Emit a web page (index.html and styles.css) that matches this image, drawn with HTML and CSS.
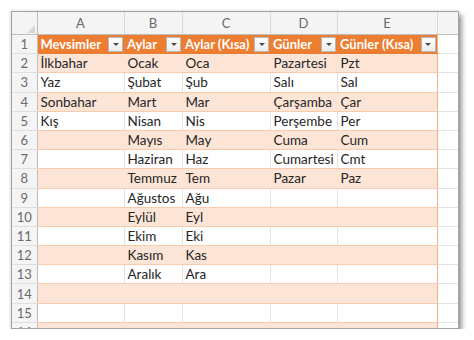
FILE: index.html
```html
<!DOCTYPE html>
<html lang="tr">
<head>
<meta charset="utf-8">
<title>Tablo</title>
<link rel="stylesheet" href="styles.css">
</head>
<body>
<div class="sheet">
  <table class="grid">
    <colgroup>
      <col class="c-rh"><col class="c-a"><col class="c-b"><col class="c-c"><col class="c-d"><col class="c-e"><col class="c-f">
    </colgroup>
    <thead>
      <tr class="letters">
        <th class="corner"><div class="corner-in"><svg width="8" height="8" viewBox="0 0 8 8"><polygon points="8,0 8,8 0,8" fill="#d6d6d6"/></svg></div></th>
        <th>A</th><th>B</th><th>C</th><th>D</th><th>E</th><th class="f"></th>
      </tr>
    </thead>
    <tbody>
      <tr class="hdr">
        <th class="rh">1</th>
        <td><div class="hc"><span>Mevsimler</span><span class="fb"><i></i></span></div></td>
        <td><div class="hc"><span>Aylar</span><span class="fb"><i></i></span></div></td>
        <td><div class="hc"><span>Aylar (Kısa)</span><span class="fb"><i></i></span></div></td>
        <td><div class="hc"><span>Günler</span><span class="fb"><i></i></span></div></td>
        <td class="last"><div class="hc"><span>Günler (Kısa)</span><span class="fb"><i></i></span></div></td>
        <td class="f"></td>
      </tr>
      <tr class="band"><th class="rh">2</th><td>İlkbahar</td><td>Ocak</td><td>Oca</td><td>Pazartesi</td><td class="last">Pzt</td><td class="f"></td></tr>
      <tr class="plain"><th class="rh">3</th><td>Yaz</td><td>Şubat</td><td>Şub</td><td>Salı</td><td class="last">Sal</td><td class="f"></td></tr>
      <tr class="band"><th class="rh">4</th><td>Sonbahar</td><td>Mart</td><td>Mar</td><td>Çarşamba</td><td class="last">Çar</td><td class="f"></td></tr>
      <tr class="plain"><th class="rh">5</th><td>Kış</td><td>Nisan</td><td>Nis</td><td>Perşembe</td><td class="last">Per</td><td class="f"></td></tr>
      <tr class="band"><th class="rh">6</th><td></td><td>Mayıs</td><td>May</td><td>Cuma</td><td class="last">Cum</td><td class="f"></td></tr>
      <tr class="plain"><th class="rh">7</th><td></td><td>Haziran</td><td>Haz</td><td>Cumartesi</td><td class="last">Cmt</td><td class="f"></td></tr>
      <tr class="band"><th class="rh">8</th><td></td><td>Temmuz</td><td>Tem</td><td>Pazar</td><td class="last">Paz</td><td class="f"></td></tr>
      <tr class="plain"><th class="rh">9</th><td></td><td>Ağustos</td><td>Ağu</td><td></td><td class="last"></td><td class="f"></td></tr>
      <tr class="band"><th class="rh">10</th><td></td><td>Eylül</td><td>Eyl</td><td></td><td class="last"></td><td class="f"></td></tr>
      <tr class="plain"><th class="rh">11</th><td></td><td>Ekim</td><td>Eki</td><td></td><td class="last"></td><td class="f"></td></tr>
      <tr class="band"><th class="rh">12</th><td></td><td>Kasım</td><td>Kas</td><td></td><td class="last"></td><td class="f"></td></tr>
      <tr class="plain"><th class="rh">13</th><td></td><td>Aralık</td><td>Ara</td><td></td><td class="last"></td><td class="f"></td></tr>
      <tr class="band"><th class="rh">14</th><td></td><td></td><td></td><td></td><td class="last"></td><td class="f"></td></tr>
      <tr class="plain"><th class="rh">15</th><td></td><td></td><td></td><td></td><td class="last"></td><td class="f"></td></tr>
      <tr class="band"><th class="rh">16</th><td></td><td></td><td></td><td></td><td class="last"></td><td class="f"></td></tr>
    </tbody>
  </table>
</div>
</body>
</html>
```
FILE: styles.css
```css
html, body {
  margin: 0;
  padding: 0;
  background: #ffffff;
}

body {
  font-family: Lato, "Liberation Sans", sans-serif;
  font-size: 13px;
  color: #262626;
}

.sheet {
  margin: 11px 0 0 11px;
  width: 446px;
  height: 316px;
  border: 1px solid #a3a3a3;
  overflow: hidden;
  background: #ffffff;
  box-shadow: 3px 4px 5px rgba(0, 0, 0, 0.38), 0 0 3px rgba(0, 0, 0, 0.15);
}

.grid {
  border-collapse: collapse;
  table-layout: fixed;
  width: 446px;
}

.c-rh { width: 25px; }
.c-a { width: 87px; }
.c-b { width: 58px; }
.c-c { width: 88px; }
.c-d { width: 67px; }
.c-e { width: 100px; }
.c-f { width: 21px; }

.letters th {
  height: 22px;
  padding: 0;
  background: #f4f4f4;
  color: #6a6a6a;
  font-weight: normal;
  text-align: center;
  border-right: 1px solid #dadada;
  border-bottom: 1px solid #bdbdbd;
}

.letters th.corner {
  border-right: 1px solid #bdbdbd;
}

.corner-in {
  height: 21px;
  display: flex;
  justify-content: flex-end;
  align-items: flex-end;
  padding: 0 2px 1px 0;
}

tbody tr {
  height: 19.2px;
}

tbody th.rh {
  padding: 0;
  background: #f4f4f4;
  color: #6a6a6a;
  font-weight: normal;
  text-align: center;
  border-right: 1px solid #bdbdbd;
  border-bottom: 1px solid #dedede;
}

tbody td {
  padding: 0 0 0 3px;
  white-space: nowrap;
  overflow: hidden;
  line-height: 18px;
  font-size: 13.5px;
}

tbody td.f {
  background: #ffffff;
  border-bottom: 1px solid #e2e2e2;
  border-left: 1px solid #f4b084;
}

.hdr td {
  background: #ed7d31;
  color: #ffffff;
  font-weight: bold;
  font-size: 13px;
  padding: 0;
  border-bottom: 1px solid #ed7d31;
}

.hdr td.f {
  border-bottom: 1px solid #e2e2e2;
}

.hc {
  display: flex;
  align-items: center;
  justify-content: space-between;
  padding: 0 1px 0 3px;
  height: 18px;
}

.fb {
  flex: none;
  width: 13px;
  height: 13px;
  border: 1px solid #b7b7b7;
  background: linear-gradient(#ffffff, #ececec);
  display: flex;
  align-items: center;
  justify-content: center;
}

.fb i {
  display: block;
  width: 0;
  height: 0;
  border-left: 3px solid transparent;
  border-right: 3px solid transparent;
  border-top: 3px solid #4a4a4a;
}

.band td {
  background: #fce4d6;
  border-bottom: 1px solid #f8cbad;
  border-right: 1px solid #fce4d6;
}

.plain td {
  background: #ffffff;
  border-bottom: 1px solid #f8cbad;
  border-right: 1px solid #e2e2e2;
}

tbody td.last {
  border-right: 1px solid #f4b084;
}
```
